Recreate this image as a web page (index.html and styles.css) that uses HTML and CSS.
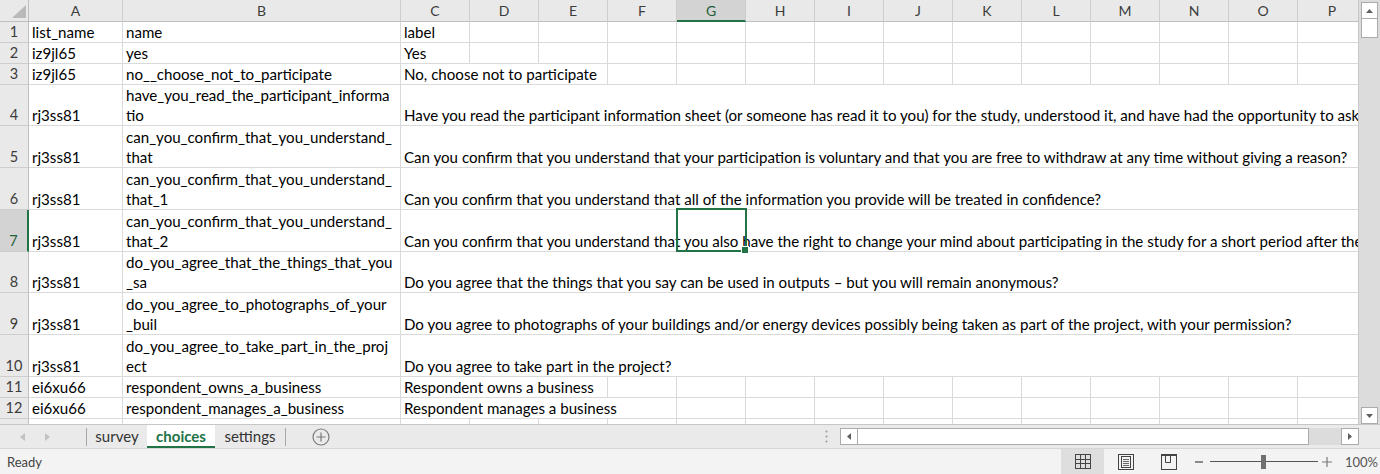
FILE: index.html
```html
<!DOCTYPE html>
<html>
<head>
<meta charset="utf-8">
<title>choices</title>
<link rel="stylesheet" href="styles.css">
</head>
<body>
<div class="app">
  <div class="main">
    <div class="sheet">
      <div class="grid">
        <div class="h corner"></div><div class="h">A</div><div class="h">B</div><div class="h">C</div><div class="h">D</div><div class="h">E</div><div class="h">F</div><div class="h sel">G</div><div class="h">H</div><div class="h">I</div><div class="h">J</div><div class="h">K</div><div class="h">L</div><div class="h">M</div><div class="h">N</div><div class="h">O</div><div class="h">P</div>

        <div class="r">1</div><div class="c">list_name</div><div class="c">name</div><div class="c">label</div>
        <div class="c"></div><div class="c"></div><div class="c"></div><div class="c"></div><div class="c"></div><div class="c"></div><div class="c"></div><div class="c"></div><div class="c"></div><div class="c"></div><div class="c"></div><div class="c"></div><div class="c"></div>

        <div class="r">2</div><div class="c">iz9jl65</div><div class="c">yes</div><div class="c">Yes</div>
        <div class="c"></div><div class="c"></div><div class="c"></div><div class="c"></div><div class="c"></div><div class="c"></div><div class="c"></div><div class="c"></div><div class="c"></div><div class="c"></div><div class="c"></div><div class="c"></div><div class="c"></div>

        <div class="r">3</div><div class="c">iz9jl65</div><div class="c">no__choose_not_to_participate</div><div class="c s3">No, choose not to participate</div>
        <div class="c"></div><div class="c"></div><div class="c"></div><div class="c"></div><div class="c"></div><div class="c"></div><div class="c"></div><div class="c"></div><div class="c"></div><div class="c"></div><div class="c"></div>

        <div class="r">4</div><div class="c">rj3ss81</div><div class="c"><span>have_you_read_the_participant_informa<br>tio</span></div><div class="c s14">Have you read the participant information sheet (or someone has read it to you) for the study, understood it, and have had the opportunity to ask questions?</div>

        <div class="r">5</div><div class="c">rj3ss81</div><div class="c"><span>can_you_confirm_that_you_understand_<br>that</span></div><div class="c s14">Can you confirm that you understand that your participation is voluntary and that you are free to withdraw at any time without giving a reason?</div>

        <div class="r">6</div><div class="c">rj3ss81</div><div class="c"><span>can_you_confirm_that_you_understand_<br>that_1</span></div><div class="c s14">Can you confirm that you understand that all of the information you provide will be treated in confidence?</div>

        <div class="r rsel">7</div><div class="c">rj3ss81</div><div class="c"><span>can_you_confirm_that_you_understand_<br>that_2</span></div><div class="c s14">Can you confirm that you understand that you also have the right to change your mind about participating in the study for a short period after the interview</div>

        <div class="r">8</div><div class="c">rj3ss81</div><div class="c"><span>do_you_agree_that_the_things_that_you<br>_sa</span></div><div class="c s14">Do you agree that the things that you say can be used in outputs – but you will remain anonymous?</div>

        <div class="r">9</div><div class="c">rj3ss81</div><div class="c"><span>do_you_agree_to_photographs_of_your<br>_buil</span></div><div class="c s14">Do you agree to photographs of your buildings and/or energy devices possibly being taken as part of the project, with your permission?</div>

        <div class="r">10</div><div class="c">rj3ss81</div><div class="c"><span>do_you_agree_to_take_part_in_the_proj<br>ect</span></div><div class="c s14">Do you agree to take part in the project?</div>

        <div class="r">11</div><div class="c">ei6xu66</div><div class="c">respondent_owns_a_business</div><div class="c s3">Respondent owns a business</div>
        <div class="c"></div><div class="c"></div><div class="c"></div><div class="c"></div><div class="c"></div><div class="c"></div><div class="c"></div><div class="c"></div><div class="c"></div><div class="c"></div><div class="c"></div>

        <div class="r">12</div><div class="c">ei6xu66</div><div class="c">respondent_manages_a_business</div><div class="c s4">Respondent manages a business</div>
        <div class="c"></div><div class="c"></div><div class="c"></div><div class="c"></div><div class="c"></div><div class="c"></div><div class="c"></div><div class="c"></div><div class="c"></div><div class="c"></div>

        <div class="r"></div><div class="c"></div><div class="c"></div><div class="c"></div>
        <div class="c"></div><div class="c"></div><div class="c"></div><div class="c"></div><div class="c"></div><div class="c"></div><div class="c"></div><div class="c"></div><div class="c"></div><div class="c"></div><div class="c"></div><div class="c"></div><div class="c"></div>
      </div>
      <div class="cursor"></div>
    </div>
    <div class="vscroll">
      <div class="sbtn"><svg width="7" height="4" viewBox="0 0 7 4"><path d="M0 4L3.5 0L7 4Z" fill="#606060"/></svg></div>
      <div class="vthumb"></div>
      <div class="vtrack"></div>
      <div class="sbtn"><svg width="7" height="4" viewBox="0 0 7 4"><path d="M0 0L3.5 4L7 0Z" fill="#606060"/></svg></div>
    </div>
  </div>

  <div class="tabbar">
    <div class="nav">
      <svg width="5" height="8" viewBox="0 0 5 8"><path d="M5 0L0 4L5 8Z" fill="#c2c2c2"/></svg>
      <svg width="5" height="8" viewBox="0 0 5 8"><path d="M0 0L5 4L0 8Z" fill="#c2c2c2"/></svg>
    </div>
    <div class="sep"></div>
    <div class="tab t-survey">survey</div>
    <div class="tab t-choices active">choices</div>
    <div class="tab t-settings">settings</div>
    <div class="sep"></div>
    <div class="add">
      <svg width="18" height="18" viewBox="0 0 18 18"><circle cx="9" cy="9" r="8" fill="none" stroke="#7b7b7b" stroke-width="1.2"/><path d="M9 4.5V13.5M4.5 9H13.5" stroke="#7b7b7b" stroke-width="1.2"/></svg>
    </div>
    <div class="spacer"></div>
    <div class="split">
      <svg width="3" height="13" viewBox="0 0 3 13"><circle cx="1.5" cy="1.5" r="1" fill="#9a9a9a"/><circle cx="1.5" cy="6.5" r="1" fill="#9a9a9a"/><circle cx="1.5" cy="11.5" r="1" fill="#9a9a9a"/></svg>
    </div>
    <div class="hscroll">
      <div class="hbtn"><svg width="4" height="7" viewBox="0 0 4 7"><path d="M4 0L0 3.5L4 7Z" fill="#606060"/></svg></div>
      <div class="hthumb"></div>
      <div class="htrack"></div>
      <div class="hbtn"><svg width="4" height="7" viewBox="0 0 4 7"><path d="M0 0L4 3.5L0 7Z" fill="#606060"/></svg></div>
    </div>
    <div class="tcorner"></div>
  </div>

  <div class="status">
    <div class="ready">Ready</div>
    <div class="spacer"></div>
    <div class="view on">
      <svg width="16" height="15" viewBox="0 0 16 15"><rect x="0.5" y="0.5" width="15" height="14" fill="none" stroke="#444"/><path d="M5.5 0.5V14.5M10.5 0.5V14.5M0.5 5.5H15.5M0.5 9.5H15.5" stroke="#444"/></svg>
    </div>
    <div class="view">
      <svg width="16" height="16" viewBox="0 0 16 16"><rect x="0.5" y="0.5" width="15" height="15" fill="none" stroke="#444"/><rect x="3.5" y="2.5" width="9" height="11" fill="none" stroke="#444"/><path d="M5 5.5H11M5 7.5H11M5 9.5H11M5 11.5H11" stroke="#666"/></svg>
    </div>
    <div class="view">
      <svg width="16" height="16" viewBox="0 0 16 16"><rect x="0.5" y="0.5" width="15" height="15" fill="none" stroke="#444"/><path d="M0.5 1.5H15.5M4.5 1V8.5H9.5V1M9.5 1.5V8.5" fill="none" stroke="#444"/></svg>
    </div>
    <div class="zminus"><span class="minusbar"></span></div>
    <div class="slider"><span class="sline"></span><span class="sthumb"></span></div>
    <div class="zplus">
      <svg width="10" height="10" viewBox="0 0 10 10"><path d="M5 0V10M0 5H10" stroke="#7a7a7a" stroke-width="1.2"/></svg>
    </div>
    <div class="pct">100%</div>
  </div>
</div>
</body>
</html>
```

FILE: styles.css
```css
* { box-sizing: border-box; }
html, body { margin: 0; padding: 0; }
body {
  width: 1380px;
  height: 474px;
  overflow: hidden;
  background: #fff;
  font-family: Lato, "Liberation Sans", sans-serif;
  font-size: 15.1px;
  color: #000;
}
.app { display: flex; flex-direction: column; width: 1380px; height: 474px; }

/* ---------- sheet ---------- */
.main { display: flex; height: 424px; }
.sheet { position: relative; width: 1358px; height: 424px; overflow: hidden; }
.grid {
  display: grid;
  grid-template-columns: 29px 94px 278px repeat(14, 69px);
  grid-template-rows: 22px 21px 21px 21px 41px 42px 42px 42px 41px 42px 42px 21px 21px 21px;
  width: max-content;
}
.c {
  display: flex;
  align-items: flex-end;
  padding: 0 2px 0 3px;
  border-right: 1px solid #dadada;
  border-bottom: 1px solid #dadada;
  white-space: nowrap;
  overflow: hidden;
  line-height: 20px;
}
.c span { display: block; }
.s3 { grid-column: span 3; }
.s4 { grid-column: span 4; }
.s14 { grid-column: span 14; }

.h {
  display: flex;
  align-items: center;
  justify-content: center;
  background: #e9e9e9;
  color: #3c3c3c;
  font-size: 14px;
  border-right: 1px solid #cdcdcd;
  border-bottom: 1px solid #bfbfbf;
}
.h.sel { background: #d3d3d3; color: #1f5f3b; border-bottom: 2px solid #217346; }
.corner { position: relative; border-right-color: #bfbfbf; }
.corner::after {
  content: "";
  position: absolute;
  right: 2px;
  bottom: 3px;
  width: 14px;
  height: 13px;
  background: #b9b9b9;
  clip-path: polygon(100% 0, 100% 100%, 0 100%);
}
.r {
  display: flex;
  align-items: flex-end;
  justify-content: center;
  background: #e9e9e9;
  color: #3c3c3c;
  font-size: 14.5px;
  line-height: 20px;
  border-right: 1px solid #bfbfbf;
  border-bottom: 1px solid #cdcdcd;
}
.r.rsel { background: #d3d3d3; color: #1f5f3b; border-right: 2px solid #217346; }

.cursor {
  position: absolute;
  left: 676px;
  top: 208px;
  width: 71px;
  height: 44px;
  border: 2px solid #217346;
}
.cursor::after {
  content: "";
  position: absolute;
  right: -4px;
  bottom: -4px;
  width: 6px;
  height: 6px;
  background: #217346;
  border: 1px solid #fff;
}

/* ---------- vertical scrollbar ---------- */
.vscroll {
  width: 22px;
  height: 424px;
  background: #dcdcdc;
  border-left: 1px solid #c8c8c8;
  display: flex;
  flex-direction: column;
  align-items: center;
  padding-top: 2px;
}
.sbtn {
  width: 17px;
  height: 17px;
  flex: none;
  background: #fff;
  border: 1px solid #ababab;
  display: flex;
  align-items: center;
  justify-content: center;
}
.vthumb { width: 17px; height: 19px; flex: none; background: #fff; border: 1px solid #ababab; border-top: none; }
.vtrack { flex: 1; }

/* ---------- sheet tabs ---------- */
.tabbar {
  display: flex;
  height: 24px;
  background: #eaeaea;
  border-top: 1px solid #c6c6c6;
  font-size: 15px;
  color: #333;
}
.nav { width: 86px; display: flex; align-items: center; gap: 20px; padding-left: 20px; }
.sep { width: 1px; background: #a8a8a8; margin: 3px 0 2px; }
.tab { display: flex; align-items: center; justify-content: center; padding-bottom: 1px; }
.t-survey { width: 60px; }
.t-choices { width: 68px; }
.t-settings { width: 70px; }
.tab.active {
  background: #fff;
  color: #217346;
  font-weight: bold;
  border-bottom: 2px solid #217346;
  padding-bottom: 0;
}
.add { width: 70px; display: flex; align-items: center; justify-content: center; }
.spacer { flex: 1; }
.split { width: 14px; margin-right: 7px; display: flex; align-items: center; justify-content: center; }
.hscroll { width: 519px; height: 17px; margin-top: 3px; display: flex; }
.hbtn {
  width: 18px;
  height: 17px;
  flex: none;
  background: #fff;
  border: 1px solid #ababab;
  display: flex;
  align-items: center;
  justify-content: center;
}
.hthumb { width: 451px; flex: none; background: #fff; border: 1px solid #ababab; border-left: none; }
.htrack { flex: 1; background: #dcdcdc; }
.tcorner { width: 21px; }

/* ---------- status bar ---------- */
.status {
  display: flex;
  height: 26px;
  background: #f3f3f3;
  border-top: 1px solid #d6d6d6;
  font-size: 13px;
  color: #444;
}
.ready { display: flex; align-items: center; padding-left: 7px; }
.view { width: 43px; display: flex; align-items: center; justify-content: center; }
.view.on { background: #dedede; }
.zminus { width: 18px; display: flex; align-items: center; justify-content: center; }
.minusbar { width: 8px; height: 2px; background: #8a8a8a; }
.slider { position: relative; width: 108px; margin-left: 2px; display: flex; align-items: center; }
.sline { width: 100%; height: 1px; background: #555; }
.sthumb { position: absolute; left: 51px; top: 6px; width: 5px; height: 14px; background: #707070; }
.zplus { width: 18px; display: flex; align-items: center; justify-content: center; }
.pct { width: 44px; display: flex; align-items: center; padding-left: 9px; color: #555; }
```
